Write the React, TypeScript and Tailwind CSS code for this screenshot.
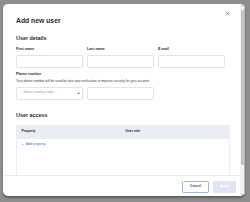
const fields = ['First name', 'Last name', 'E-mail'];

export default function App() {
  return (
    <div
      className="w-[250px] h-[202px] bg-[#8e8e8e] pt-[4px] pl-[3px] pr-[5px] overflow-hidden"
      style={{ fontFamily: '"Liberation Sans", Arial, sans-serif' }}
    >
      <div className="flex h-[192px] bg-white rounded-[5px] shadow-[0_2px_2px_rgba(0,0,0,0.35)] overflow-hidden">
        <AddUserForm />
        <Scrollbar />
      </div>
    </div>
  );
}

function AddUserForm() {
  return (
    <div className="flex-1 flex flex-col text-[#2b2b2b]">
      {/* Close */}
      <div className="flex justify-end pt-[7px] pr-[10px] h-[12px]">
        <svg width="5" height="5" viewBox="0 0 10 10" className="text-[#6b6b6b]">
          <path d="M1 1 L9 9 M9 1 L1 9" stroke="currentColor" strokeWidth="1.3" />
        </svg>
      </div>

      <div className="pl-[13px] pr-[10.5px]">
        <h1 className="text-[6.8px] leading-[9px] font-bold">Add new user</h1>

        <h2 className="mt-[9px] text-[5.4px] leading-[8px] font-semibold">User details</h2>

        <div className="mt-[4px] flex gap-[4px]">
          {fields.map((f) => (
            <div key={f} className="flex flex-col w-[67px]">
              <label className="text-[3.6px] leading-[6px] font-semibold">{f}</label>
              <div className="mt-[2.5px] h-[13px] rounded-[1.5px] border border-[#dfe3ec] bg-white" />
            </div>
          ))}
        </div>

        <div className="mt-[3.5px] text-[3.6px] leading-[6px] font-semibold">Phone number</div>
        <div className="mt-[1.5px] text-[3.25px] leading-[5px] text-[#3a3a3a]">
          Your phone number will be used for two-step verification to improve security for your account.
        </div>

        <div className="mt-[3px] flex gap-[4px]">
          <div className="w-[67px] h-[13px] rounded-[1.5px] border border-[#dfe3ec] flex items-center justify-between pl-[3px] pr-[2px]">
            <span className="text-[3.4px] text-[#9a9a9a]">---Select country code---</span>
            <svg width="3" height="3" viewBox="0 0 6 6" className="text-[#444]">
              <path d="M0.5 1.5 L3 4.5 L5.5 1.5 Z" fill="currentColor" />
            </svg>
          </div>
          <div className="w-[67px] h-[13px] rounded-[1.5px] border border-[#dfe3ec]" />
        </div>

        <h2 className="mt-[11.5px] text-[5.4px] leading-[8px] font-semibold">User access</h2>

        <div className="mt-[6px] border-x border-[#eceef3]">
          <div className="h-[14px] bg-[#eaedf4] flex items-center text-[3.4px] font-semibold">
            <span className="pl-[4.5px] w-[108.5px]">Property</span>
            <span>User role</span>
          </div>
          <div className="h-[36px] pt-[2.5px] pl-[4.5px]">
            <div className="flex items-center gap-[2.5px] leading-[5px] text-[3.4px] text-[#3d6fd1]">
              <span className="text-[3.6px]">+</span>
              <span>Add property</span>
            </div>
          </div>
        </div>
      </div>

      {/* Footer */}
      <div className="border-t border-[#ebedf1] pt-[5px] pr-[4px] flex justify-end gap-[4px]">
        <button className="w-[27px] h-[12px] rounded-[1.5px] border border-[#9bb5e6] bg-white text-[3.4px] font-semibold text-[#2f4f8f]">
          Cancel
        </button>
        <button className="w-[23px] h-[12px] rounded-[1.5px] bg-[#dfe5f1] text-[3.4px] font-semibold text-white">
          Apply
        </button>
      </div>
    </div>
  );
}

function Scrollbar() {
  return (
    <div className="w-[5px] bg-[#f1f1f1] border-r border-[#b9b9b9] flex flex-col items-center pt-[1px]">
      <div className="w-0 h-0 border-x-[1px] border-x-transparent border-b-[1.5px] border-b-[#888]" />
      <div className="mt-[4px] w-[3px] h-[155px] bg-[#c4c4c4] rounded-[1px]" />
      <div className="mt-auto mb-[1px] w-0 h-0 border-x-[1px] border-x-transparent border-t-[1.5px] border-t-[#888]" />
    </div>
  );
}
